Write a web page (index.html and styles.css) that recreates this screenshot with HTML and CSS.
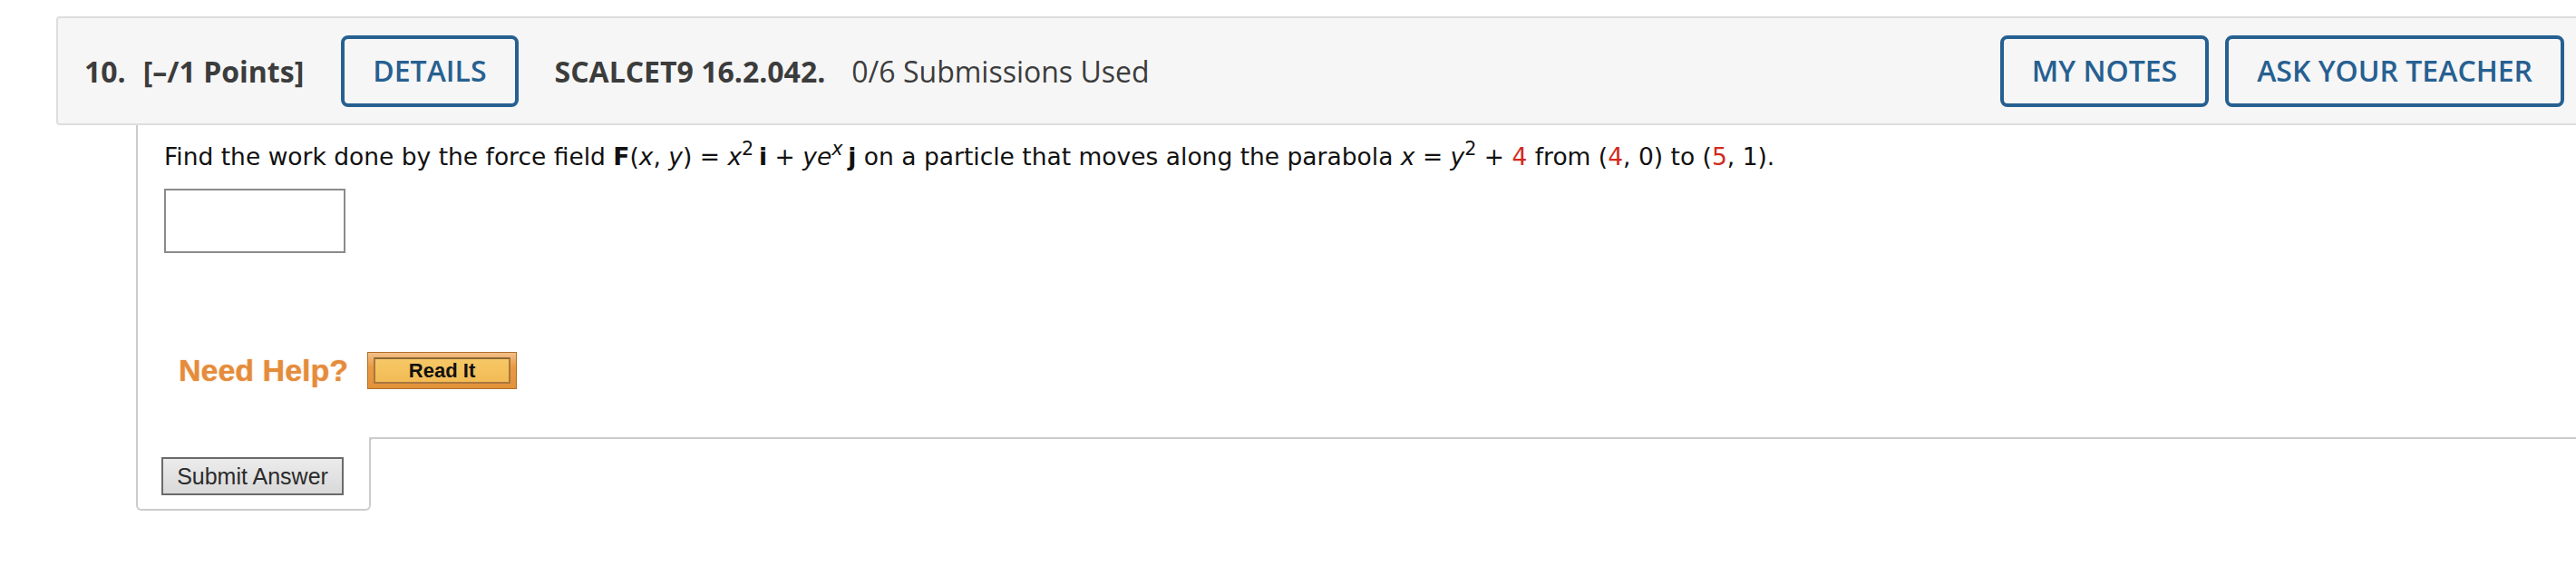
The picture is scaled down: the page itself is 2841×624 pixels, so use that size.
FILE: index.html
```html
<!DOCTYPE html>
<html lang="en">
<head>
<meta charset="utf-8">
<title>Question 10</title>
<link rel="stylesheet" href="styles.css">
</head>
<body>
<div class="page">
  <div class="header">
    <span class="qnum">10.</span>
    <span class="points">[–/1 Points]</span>
    <button class="hbtn details">DETAILS</button>
    <span class="code">SCALCET9 16.2.042.</span>
    <span class="subs">0/6 Submissions Used</span>
    <div class="hright">
      <button class="hbtn">MY NOTES</button>
      <button class="hbtn">ASK YOUR TEACHER</button>
    </div>
  </div>
  <div class="qbody">
    <p class="question">Find the work done by the force field <b>F</b>(<i>x</i>, <i>y</i>) = <i>x</i><sup>2</sup><b class="vec">i</b> + <i>ye</i><sup><i>x</i></sup><b class="vec">j</b> on a particle that moves along the parabola <i>x</i> = <i>y</i><sup>2</sup> + <span class="red">4</span> from (<span class="red">4</span>, 0) to (<span class="red">5</span>, 1).</p>
    <input class="answer" type="text" aria-label="answer">
    <div class="help">
      <span class="need">Need Help?</span>
      <button class="readit"><span class="readit-inner">Read It</span></button>
    </div>
  </div>
  <div class="footer">
    <div class="tab"><button class="submit">Submit Answer</button></div>
    <div class="fline"></div>
  </div>
</div>
</body>
</html>
```

FILE: styles.css
```css
html, body {
  margin: 0;
  padding: 0;
  background: #ffffff;
  overflow-x: hidden;
}

.page {
  margin: 18px 0 0 62px;
  width: 2800px;
}

.header {
  display: flex;
  align-items: center;
  height: 120px;
  box-sizing: border-box;
  background: #f6f6f6;
  border: 2px solid #dedede;
  border-radius: 4px;
  padding: 0 32px 0 29px;
  font-family: "Open Sans", "Liberation Sans", sans-serif;
  font-size: 32px;
  color: #3c3c3c;
}

.qnum { font-weight: 700; }
.points { font-weight: 700; margin-left: 19px; }
.code { font-weight: 700; margin-left: 40px; }
.subs { font-weight: 400; margin-left: 29px; }

.hbtn {
  height: 79px;
  box-sizing: border-box;
  border: 4px solid #266091;
  border-radius: 8px;
  background: transparent;
  color: #266091;
  font-family: "Open Sans", "Liberation Sans", sans-serif;
  font-size: 32px;
  font-weight: 600;
  padding: 0 31px;
  line-height: 1;
}

.details { margin-left: 41px; }

.hright {
  margin-left: auto;
  display: flex;
  gap: 18px;
}

.qbody {
  margin-left: 88px;
  border-left: 2px solid #cccccc;
  padding: 15px 0 53px 29px;
}

.question {
  margin: 0;
  font-family: "DejaVu Sans", Verdana, sans-serif;
  font-size: 26.5px;
  line-height: 40px;
  color: #111111;
}

.question sup {
  font-size: 0.78em;
  line-height: 0;
  vertical-align: 0.55em;
}

.question .vec { margin-left: 0.22em; }
.red { color: #d22a1e; }

.answer {
  display: block;
  margin: 15px 0 0 0;
  width: 200px;
  height: 71px;
  box-sizing: border-box;
  border: 2px solid #8a8a8a;
  background: #ffffff;
  padding: 0;
}

.help {
  display: flex;
  align-items: center;
  margin: 109px 0 0 16px;
  gap: 21px;
}

.need {
  font-family: "Liberation Sans", Arial, sans-serif;
  font-weight: 700;
  font-size: 34px;
  color: #e58c3c;
  text-shadow: 0 0 1.5px rgba(229, 140, 60, 0.7);
}

.readit {
  width: 165px;
  height: 41px;
  box-sizing: border-box;
  padding: 5px 6px;
  border: 1px solid #b06e2a;
  background: linear-gradient(#f3c08a, #e89a42 40%, #e3923a);
  display: flex;
}

.readit-inner {
  flex: 1;
  display: flex;
  align-items: center;
  justify-content: center;
  background: linear-gradient(#f6c866, #f2bb55);
  border: 2px solid #a9773f;
  border-top-color: #8c6436;
  font-family: "Liberation Sans", Arial, sans-serif;
  font-weight: 700;
  font-size: 22px;
  color: #111111;
}

.footer {
  display: flex;
  margin-left: 88px;
}

.tab {
  width: 259px;
  box-sizing: border-box;
  border: 2px solid #cccccc;
  border-top: none;
  border-radius: 0 0 6px 6px;
  padding: 22px 0 15px 26px;
}

.submit {
  width: 201px;
  height: 42px;
  box-sizing: border-box;
  border: 2px solid #6a6a6a;
  background: linear-gradient(#ececec, #d9d9d9);
  font-family: "Liberation Sans", Arial, sans-serif;
  font-size: 25px;
  color: #2b2b2b;
  padding: 0;
}

.fline {
  flex: 1;
  margin-left: -2px;
  border-top: 2px solid #cccccc;
  border-left: 2px solid #cccccc;
  border-top-left-radius: 4px;
  height: 20px;
}
```
